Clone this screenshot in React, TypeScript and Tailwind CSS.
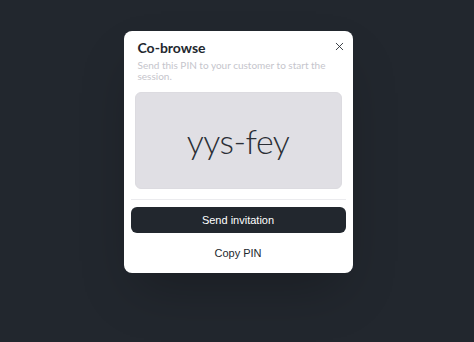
import { X } from 'lucide-react'

const App = () => {
  return (
    <div className="w-[474px] h-[342px] bg-[#22272e] flex justify-center pt-[31px] pl-[2px]">
      <div
        className="w-[229px] h-[242px] bg-white rounded-lg shadow-2xl flex flex-col"
        style={{ fontFamily: 'Lato, sans-serif' }}
      >
        {/* Header */}
        <div className="flex items-start justify-between pl-[14px] pr-[7px] pt-[8px]">
          <h2 className="text-[14px] font-bold text-[#22272e] leading-[18px]">Co-browse</h2>
          <button className="mt-[1px] text-[#22272e]">
            <X className="h-[13px] w-[13px]" strokeWidth={1.6} />
          </button>
        </div>
        <p className="pl-[14px] pr-[10px] text-[10px] leading-[11px] text-[#c5c5cc] mt-[3px]">
          Send this PIN to your customer to start the session.
        </p>

        {/* PIN */}
        <div className="mx-[11px] mt-[10px] h-[97px] shrink-0 rounded-md bg-[#e0dfe4] border border-[#dcdbe0] flex items-center justify-center">
          <span className="text-[34px] font-light text-[#2b2f36] tracking-[-0.5px]">yys-fey</span>
        </div>

        <div className="mx-[7px] mt-[10px] border-t border-[#ebebee]" />

        {/* Actions */}
        <div className="px-[7px] pt-[7px] flex flex-col" style={{ fontFamily: '"Liberation Sans", Arial, sans-serif' }}>
          <button className="h-[26px] rounded-md bg-[#22272e] text-white text-[11px]">
            Send invitation
          </button>
          <button className="h-[40px] text-[11px] text-[#22272e]">Copy PIN</button>
        </div>
      </div>
    </div>
  )
}

export default App
